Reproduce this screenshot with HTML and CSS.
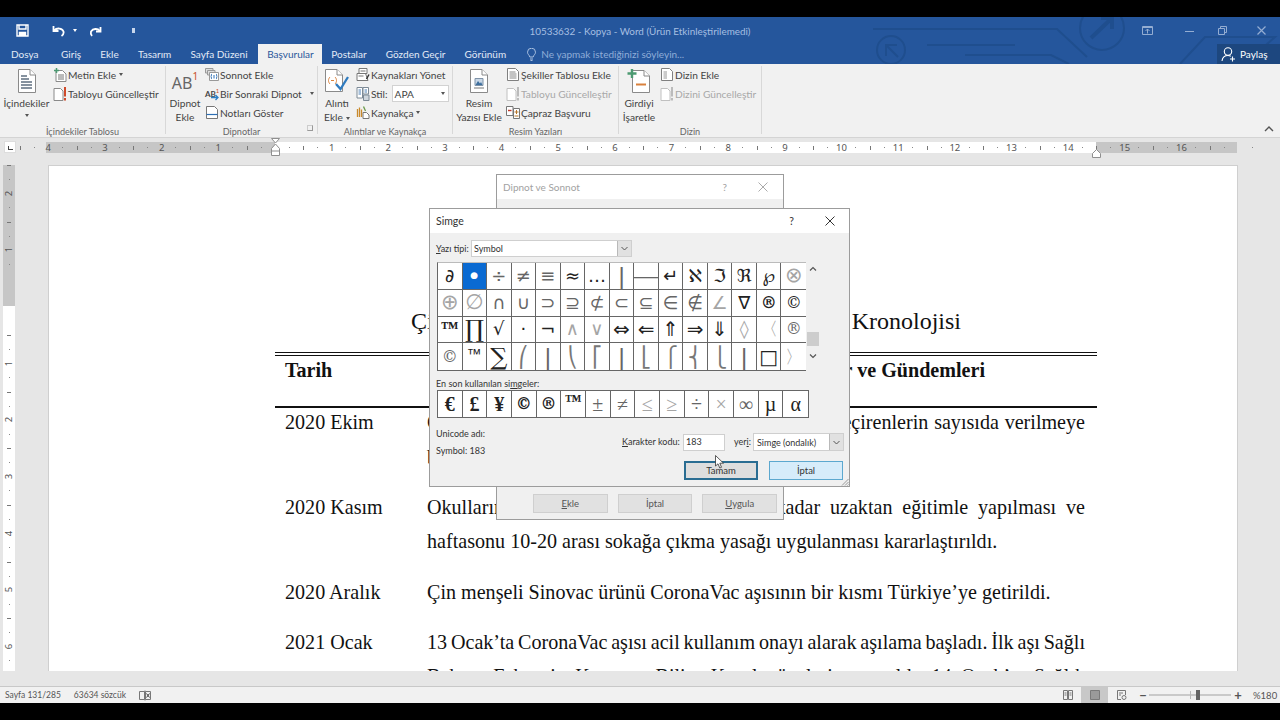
FILE: index.html
```html
<!DOCTYPE html>
<html lang="tr">
<head>
<meta charset="utf-8">
<title>10533632 - Kopya - Word</title>
<link rel="stylesheet" href="styles.css">
</head>
<body>
<div class="screen">
  <div class="letterbox"></div>
  <header class="chrome">
    <svg class="circuit" width="415" height="47" viewBox="0 0 415 47" fill="none" stroke="#1f4e8e" stroke-width="2">
      <path d="M8 12H160L172 12H192L222 40"/><circle cx="26" cy="33" r="14"/><path d="M21 39V28H32M21 28L33 40"/>
      <path d="M62 28H150"/><path d="M100 38H186L204 47"/><circle cx="237" cy="11" r="22"/><path d="M226 21L247 1M236 1H247V12" stroke-width="4"/>
      <path d="M315 47L340 20H410L380 47"/>
    </svg>
    <div class="titlebar">
      <div class="qat">
        <svg class="q-save" width="13" height="13" viewBox="0 0 13 13" fill="none" stroke="#fff" stroke-width="1.4"><path d="M1 1H12V12H1Z"/><path d="M3 1V5H10V1"/><path d="M3.5 12V8.5H9.5V12" fill="#fff"/></svg>
        <svg class="q-undo" width="13" height="12" viewBox="0 0 13 12" fill="none" stroke="#fff" stroke-width="1.8"><path d="M1.5 1V6H6.5"/><path d="M2 5.5C5 2.5 10 3 11.5 6.5C12 8.5 11 10 9.5 11"/></svg>
        <span class="caret q-c1"></span>
        <svg class="q-redo" width="13" height="12" viewBox="0 0 13 12" fill="none" stroke="#fff" stroke-width="1.8"><path d="M11.5 2V6.5H7"/><path d="M11 6C8.500 3 4 3.500 2 6.500C1.500 8 1.800 9.500 3 11"/></svg>
        <span class="q-more"></span>
      </div>
      <div class="doc-title">10533632 - Kopya - Word (Ürün Etkinleştirilemedi)</div>
      <div class="winbtns">
        <svg width="11" height="9" viewBox="0 0 11 9" fill="none" stroke="#94add2"><path d="M.5.5H10.500V8.500H.5Z"/><path d="M5.500 7.500V3M3.500 5L5.500 3L7.500 5" /><path d="M1 1.500H10" /></svg>
        <svg class="w-min" width="9" height="9" viewBox="0 0 9 9" stroke="#94add2"><path d="M0 5.500H9"/></svg>
        <svg class="w-res" width="9" height="9" viewBox="0 0 9 9" fill="none" stroke="#94add2"><path d="M.5 2.500H6.500V8.500H.5ZM2.500 2.500V.5H8.500V6.500H6.500"/></svg>
        <svg class="w-cls" width="9" height="9" viewBox="0 0 9 9" stroke="#94add2" stroke-width="1.200"><path d="M.5.5L8.500 8.500M8.500.5L.5 8.500"/></svg>
      </div>
    </div>
    <nav class="tabs">
      <a class="tab t-file">Dosya</a>
      <a class="tab">Giriş</a>
      <a class="tab">Ekle</a>
      <a class="tab">Tasarım</a>
      <a class="tab">Sayfa Düzeni</a>
      <a class="tab active">Başvurular</a>
      <a class="tab">Postalar</a>
      <a class="tab">Gözden Geçir</a>
      <a class="tab">Görünüm</a>
      <div class="tellme">
        <svg width="9" height="13" viewBox="0 0 9 13" fill="none" stroke="#a9c0e0"><path d="M2.800 9C2.500 7 .5 6.500.5 4.200A4 4 0 0 1 8.500 4.200C8.500 6.500 6.500 7 6.200 9ZM3 11H6M3.500 12.500H5.500"/></svg>
        <span>Ne yapmak istediğinizi söyleyin...</span>
      </div>
      <div class="share">
        <svg width="15" height="15" viewBox="0 0 15 15" fill="none" stroke="#fff" stroke-width="1.100"><circle cx="7" cy="4.500" r="3.700"/><path d="M1 14C1.500 10 4 8.500 7 8.500C8 8.500 9 8.800 9.800 9.300"/><path d="M11.500 9.500V14.500M9 12H14" /></svg>
        <span>Paylaş</span>
      </div>
    </nav>
  </header>

  <section class="ribbon">
    <div class="group g1">
      <div class="gbody">
        <div class="large w-toc">
          <div class="ic"><svg width="18" height="24" viewBox="0 0 18 24" fill="#fff" stroke="#8a8a8a"><path d="M.5.5H12L17.500 6V23.500H.5Z"/><path d="M12 .5V6H17.500" /><path d="M3 7H9M3 10H11M3 13H14M3 16H14M3 19H14" stroke="#5f6f80" stroke-width="1.300"/></svg></div>
          <span>İçindekiler</span>
          <span class="caret dark big-caret"></span>
        </div>
        <div class="stack">
          <div class="sm"><svg width="13" height="14" viewBox="0 0 13 14" fill="#fff" stroke="#8a8a8a"><path d="M2.500 2.500H9L12.500 6V13.500H2.500Z"/><path d="M4.500 7H10.500M4.500 9H10.500M4.500 11H10.500" stroke="#777"/><path d="M3 0V5M.5 2.500H5.500" stroke="#4d9a72" stroke-width="1.500"/></svg><span>Metin Ekle</span><span class="caret dark"></span></div>
          <div class="sm"><svg width="13" height="14" viewBox="0 0 13 14" fill="#fff" stroke="#8a8a8a"><path d="M.5 1.500H7L9.500 4V13.500H.5Z"/><path d="M11.500 0V9.500M11.500 11V13.500" stroke="#d04a2a" stroke-width="2"/></svg><span>Tabloyu Güncelleştir</span></div>
        </div>
      </div>
      <div class="glabel">İçindekiler Tablosu</div>
    </div>

    <div class="group g2">
      <div class="gbody">
        <div class="large w-fn">
          <div class="ic ab"><span class="abt">AB</span><span class="sup">1</span></div>
          <span>Dipnot</span><span>Ekle</span>
        </div>
        <div class="stack st2">
          <div class="sm"><svg width="14" height="13" viewBox="0 0 14 13" fill="#fff" stroke="#999"><path d="M.5.5H8V5H.5Z" fill="#ddd"/><path d="M2.500 2.500H10V7H2.500Z" fill="#ddd"/><path d="M4.500 4.500H13.500V12.500H4.500Z"/><path d="M7 6C5.800 6 7 8.500 5.800 8.500C7 8.500 5.800 11 7 11M11 6C12.200 6 11 8.500 12.200 8.500C11 8.500 12.200 11 11 11" fill="none" stroke="#2d6fb5"/><path d="M9 7V10.500" stroke="#2d6fb5"/></svg><span>Sonnot Ekle</span></div>
          <div class="sm"><span class="ab-mini"><span class="abm">AB</span><span class="abs">1</span><svg width="8" height="7" viewBox="0 0 8 7" fill="none" stroke="#2d7fc4" stroke-width="1.300"><path d="M0 3.500H7M4.500 1L7 3.500L4.500 6"/></svg></span><span>Bir Sonraki Dipnot</span><span class="caret dark push"></span></div>
          <div class="sm"><svg width="12" height="13" viewBox="0 0 12 13" fill="#fff" stroke="#777"><path d="M.5.5H8.500L11.500 3.500V12.500H.5Z"/><path d="M.5 8.500H11.500" stroke="#2d6fb5" stroke-width="1.200"/></svg><span>Notları Göster</span></div>
        </div>
      </div>
      <div class="glabel">Dipnotlar<span class="launch"></span></div>
    </div>

    <div class="group g3">
      <div class="gbody">
        <div class="large w-cit">
          <div class="ic"><svg width="24" height="24" viewBox="0 0 24 24" fill="#fff" stroke="#8a8a8a"><path d="M.5.5H12L17.500 6V22.500H.5Z"/><path d="M12 .5V6H17.500"/><path d="M5 8C3 10 3 13 5 15M10 8C12 10 12 13 10 15" fill="none" stroke="#d9813c"/><path d="M6 11.500H9" stroke="#d9813c"/><path d="M11 15L15.500 20L23 8" fill="none" stroke="#2f7bbf" stroke-width="2.300"/></svg></div>
          <span>Alıntı</span><span>Ekle<span class="caret dark inl"></span></span>
        </div>
        <div class="stack st3">
          <div class="sm"><svg width="13" height="13" viewBox="0 0 13 13" fill="#fff" stroke="#777"><path d="M2.500.5H10.500V5.500H2.500ZM.5 5.500H9L11.500 12.500H.5Z"/><path d="M4 3H9M2 8H7" stroke="#777"/><path d="M12.500 6.500L10 11" stroke="#333" stroke-width="1.500"/></svg><span>Kaynakları Yönet</span></div>
          <div class="sm stil"><svg width="13" height="14" viewBox="0 0 13 14" fill="#fff" stroke="#7d8a96"><path d="M.5.5H6V11H.5ZM6.500.5H12V7H6.500Z"/><path d="M2 3H4.500M2 5H4.500M2 7H4.500M8 3H10.500M8 5H10.500" stroke="#4b7fb4"/><path d="M7 8H12.500V13.500H7Z" fill="#cfd6dd"/></svg><span class="stil-l">Stil:</span><span class="stil-box"><span>APA</span><span class="caret dark push"></span></span></div>
          <div class="sm"><svg width="13" height="13" viewBox="0 0 13 13" fill="none" stroke="#c98a2c"><path d="M1 11V3M3 11V1.500M5 11V3.500" stroke-width="1.300"/><path d="M7 .5L9 5" stroke="#6a9a4a" stroke-width="1.300"/><path d="M6.500 6.500H10L12.500 9V12.500H6.500Z" fill="#fff" stroke="#777"/></svg><span>Kaynakça</span><span class="caret dark"></span></div>
        </div>
      </div>
      <div class="glabel">Alıntılar ve Kaynakça</div>
    </div>

    <div class="group g4">
      <div class="gbody">
        <div class="large w-cap">
          <div class="ic"><svg width="18" height="24" viewBox="0 0 18 24" fill="#fff" stroke="#8a8a8a"><path d="M.5.5H12L17.500 6V23.500H.5Z"/><path d="M12 .5V6H17.500"/><path d="M5 9.500H13V16.500H5Z" fill="#c9d7e6" stroke="#7f93a8"/><path d="M5.500 16L8 12L10 14.500L11 13L12.500 16Z" fill="#3e6f9e" stroke="none"/><path d="M4 19H14" stroke="#777"/></svg></div>
          <span>Resim</span><span>Yazısı Ekle</span>
        </div>
        <div class="stack st4">
          <div class="sm"><svg width="12" height="13" viewBox="0 0 12 13" fill="#fff" stroke="#808080"><path d="M.5.5H8.500L11.500 3.500V12.500H.5Z"/><path d="M2.500 4H8.500M2.500 6H9.500M2.500 8H9.500M2.500 10H9.500" stroke="#888"/></svg><span>Şekiller Tablosu Ekle</span></div>
          <div class="sm off"><svg width="13" height="14" viewBox="0 0 13 14" fill="#fff" stroke="#c0c0c0"><path d="M.5 1.500H7L9.500 4V13.500H.5Z"/><path d="M11.500 0V9.500M11.500 11V13.500" stroke="#b5b5b5" stroke-width="1.800"/></svg><span>Tabloyu Güncelleştir</span></div>
          <div class="sm"><svg width="14" height="13" viewBox="0 0 14 13" fill="#fff" stroke="#777"><path d="M.5.5H7V9.500H.5Z"/><path d="M2 4.500H5.500" stroke="#c23a2a" stroke-width="1.400"/><path d="M7.500 2.500H13.500V12.500H7.500Z"/><path d="M10.500 4V8M8.500 6H12.500M8.500 10H12.500" stroke="#b7762b"/></svg><span>Çapraz Başvuru</span></div>
        </div>
      </div>
      <div class="glabel">Resim Yazıları</div>
    </div>

    <div class="group g5">
      <div class="gbody">
        <div class="large w-idx">
          <div class="ic"><svg width="24" height="24" viewBox="0 0 24 24" fill="#fff" stroke="#8a8a8a"><path d="M5.500 1.500H17L22.500 7V23.500H5.500Z"/><path d="M17 1.500V7H22.500"/><path d="M9 15.500H19" stroke="#d9813c" stroke-width="2"/><path d="M5 0V9M.5 4.500H9.500" stroke="#4d9a72" stroke-width="2.400"/></svg></div>
          <span>Girdiyi</span><span>İşaretle</span>
        </div>
        <div class="stack st5">
          <div class="sm"><svg width="12" height="13" viewBox="0 0 12 13" fill="#fff" stroke="#808080"><path d="M.5.5H8.500L11.500 3.500V12.500H.5Z"/><path d="M2.500 4H6M2.500 6H6M2.500 8H6M2.500 10H6" stroke="#999"/></svg><span>Dizin Ekle</span></div>
          <div class="sm off"><svg width="13" height="14" viewBox="0 0 13 14" fill="#fff" stroke="#c0c0c0"><path d="M.5 1.500H7L9.500 4V13.500H.5Z"/><path d="M11.500 0V9.500M11.500 11V13.500" stroke="#b5b5b5" stroke-width="1.800"/></svg><span>Dizini Güncelleştir</span></div>
        </div>
      </div>
      <div class="glabel">Dizin</div>
    </div>
    <div class="collapse"><svg width="10" height="6" viewBox="0 0 10 6" fill="none" stroke="#555" stroke-width="1.400"><path d="M1 5L5 1L9 5"/></svg></div>
  </section>

  <div class="hruler-row">
    <div class="tabsel"><span class="tabsel-l"></span></div>
    <div class="hruler">
      <div class="hcells">
        <span>4</span><span>3</span><span>2</span><span>1</span><span></span><span>1</span><span>2</span><span>3</span><span>4</span><span>5</span><span>6</span><span>7</span><span>8</span><span>9</span><span>10</span><span>11</span><span>12</span><span>13</span><span>14</span><span>15</span><span>16</span><span></span>
      </div>
      <svg class="m-left" width="9" height="19" viewBox="0 0 9 19" fill="#fff" stroke="#8f8f8f"><path d="M.5.5H8.500L4.500 5ZM4.500 6L8.500 10.500V17.500H.5V10.500ZM.5 13H8.500"/></svg>
      <svg class="m-right" width="9" height="9" viewBox="0 0 9 9" fill="#fff" stroke="#8f8f8f"><path d="M4.500.5L8.500 4.500V8.500H.5V4.500Z"/></svg>
    </div>
  </div>

  <main class="workspace">
    <div class="vruler">
      <span class="g"><b>2</b></span><span class="g"><b>1</b></span><span class="hg"></span><span class="w"><b>1</b></span><span class="w"><b>2</b></span><span class="w"><b>3</b></span><span class="w"><b>4</b></span><span class="w"><b>5</b></span><span class="w"><b>6</b></span>
    </div>
    <article class="page">
      <h1 class="doc-h">Çizelge 3. Türkiye’de COVID-19 Aşı Süreci Kronolojisi</h1>
      <div class="thead">
        <span class="c1">Tarih</span>
        <span class="c2">Türkiye’de Pandeminin Önemli Olaylar ve Gündemleri</span>
      </div>
      <div class="rows">
        <div class="row"><span class="c1">2020 Ekim</span><p class="c2">Günlük vaka sayısı açıklaması yerine sadece ağır geçirenlerin sayısıda verilmeye başlandı.</p></div>
        <div class="row"><span class="c1">2020 Kasım</span><p class="c2">Okulların birinci yarıyıl dönemi sonuna kadar uzaktan eğitimle yapılması ve haftasonu 10-20 arası sokağa çıkma yasağı uygulanması kararlaştırıldı.</p></div>
        <div class="row"><span class="c1">2020 Aralık</span><p class="c2">Çin menşeli Sinovac ürünü CoronaVac aşısının bir kısmı Türkiye’ye getirildi.</p></div>
        <div class="row"><span class="c1">2021 Ocak</span><p class="c2 tight">13 Ocak’ta CoronaVac aşısı acil kullanım onayı alarak aşılama başladı. İlk aşı Sağlı<br>Bakanı Fahrettin Koca ve Bilim Kurulu üyelerine yapıldı. 14 Ocak’ta Sağlık</p></div>
      </div>
    </article>
  </main>
  <div class="hscroll"></div>

  <footer class="status">
    <span>Sayfa 131/285</span>
    <span class="words">63634 sözcük</span>
    <svg width="12" height="11" viewBox="0 0 12 11" fill="none" stroke="#777"><path d="M5.500 1.500H.5V9.500H5.500ZM6 .5V10.500"/><path d="M6.500 1.500H11.500V9.500H6.500Z"/><path d="M7.500 3.500L10.500 7.500M10.500 3.500L7.500 7.500" stroke="#444"/></svg>
    <div class="views">
      <span class="v"><svg width="10" height="10" viewBox="0 0 10 10" fill="none" stroke="#777"><path d="M.5.500H4.500V9.500H.5ZM5.500.500H9.500V9.500H5.500Z"/><path d="M1.500 3H3.500M1.500 5H3.500M6.500 3H8.500M6.500 5H8.500"/></svg></span>
      <span class="v on"><svg width="10" height="10" viewBox="0 0 10 10" fill="#9a9a9a" stroke="#7a7a7a"><path d="M.5.500H9.500V9.500H.5Z"/></svg></span>
      <span class="v"><svg width="10" height="10" viewBox="0 0 10 10" fill="none" stroke="#777"><path d="M.5.500H8.500V5M.5.500V9.500H4"/><path d="M2 3H6M2 5H4"/><circle cx="7" cy="7.500" r="2"/></svg></span>
    </div>
    <div class="zoom">
      <span class="z-btn">−</span>
      <div class="z-track"><i class="z-mid"></i><i class="z-thumb"></i></div>
      <span class="z-btn">+</span>
    </div>
    <span class="pct">%180</span>
  </footer>
  <div class="letterbox bottom"></div>

  <div class="dlg back">
    <div class="dlg-title"><span class="dt-name">Dipnot ve Sonnot</span><span class="dt-q">?</span><svg width="10" height="10" viewBox="0 0 10 10" stroke="#aaa"><path d="M.5.5L9.500 9.500M9.500.5L.5 9.500"/></svg></div>
    <div class="back-body"></div>
    <div class="back-foot">
      <button class="bbtn"><u>E</u>kle</button>
      <button class="bbtn">İptal</button>
      <button class="bbtn"><u>U</u>ygula</button>
    </div>
  </div>

  <div class="dlg simge">
    <div class="dlg-title front"><span class="dt-name">Simge</span><span class="dt-q">?</span><svg width="10" height="10" viewBox="0 0 10 10" stroke="#333"><path d="M.5.5L9.500 9.500M9.500.5L.5 9.500"/></svg></div>
    <div class="sbody">
      <div class="fontline">
        <label><u>Y</u>azı tipi:</label>
        <div class="combo wide"><span>Symbol</span><i class="cbtn"><svg width="7" height="5" viewBox="0 0 7 5" fill="none" stroke="#555"><path d="M.5 1L3.500 4L6.500 1"/></svg></i></div>
      </div>
      <div class="gridwrap">
        <div class="cgrid">
          <span class="s-it">∂</span><span class="sel">●</span><span class="m">÷</span><span class="m">≠</span><span class="m">≡</span><span>≈</span><span>…</span><span class="m bar">|</span><span class="m dash">—</span><span>↵</span><span>ℵ</span><span>ℑ</span><span>ℜ</span><span>℘</span><span class="l ci">⊗</span>
          <span class="l ci">⊕</span><span class="l ci">∅</span><span class="m">∩</span><span class="m">∪</span><span class="m">⊃</span><span class="m">⊇</span><span class="m">⊄</span><span class="m">⊂</span><span class="m">⊆</span><span class="m">∈</span><span class="m">∉</span><span class="l">∠</span><span>∇</span><span class="sm-g b">®</span><span class="sm-g">©</span>
          <span class="tm b">™</span><span class="big">∏</span><span>√</span><span>·</span><span>¬</span><span class="l">∧</span><span class="l">∨</span><span class="ar">⇔</span><span class="ar">⇐</span><span class="ar">⇑</span><span class="ar">⇒</span><span class="ar">⇓</span><span class="l">◊</span><span class="l">〈</span><span class="m sm-g">®</span>
          <span class="m sm-g">©</span><span class="tm tm-s">™</span><span class="big">∑</span><span class="m tall">⎛</span><span class="m bar">|</span><span class="m tall">⎝</span><span class="m tall">⎡</span><span class="m bar">|</span><span class="m tall">⎣</span><span class="m tall">⎧</span><span class="m tall">⎨</span><span class="m tall">⎩</span><span class="m bar">|</span><span class="rect">□</span><span class="l">〉</span>
        </div>
        <div class="vscroll">
          <svg width="8" height="5" viewBox="0 0 8 5" fill="none" stroke="#555" stroke-width="1.200"><path d="M1 4.500L4 1.500L7 4.500"/></svg>
          <i class="thumb"></i>
          <svg width="8" height="5" viewBox="0 0 8 5" fill="none" stroke="#555" stroke-width="1.200"><path d="M1 .5L4 3.500L7 .5"/></svg>
        </div>
      </div>
      <div class="recent-l">En son kullanılan si<u>m</u>geler:</div>
      <div class="recent">
        <span class="b">€</span><span class="b">£</span><span class="b">¥</span><span class="sm-g b">©</span><span class="sm-g b">®</span><span class="tm b">™</span><span class="m">±</span><span class="m">≠</span><span class="l">≤</span><span class="l">≥</span><span class="m">÷</span><span class="l">×</span><span class="m">∞</span><span>µ</span><span>α</span>
      </div>
      <div class="codeline">
        <div class="uni"><div>Unicode adı:</div><div>Symbol: 183</div></div>
        <label class="kk"><u>K</u>arakter kodu:</label>
        <div class="input">183</div>
        <label class="yeri">yer<u>i</u>:</label>
        <div class="combo small"><span>Simge (ondalık)</span><i class="cbtn"><svg width="7" height="5" viewBox="0 0 7 5" fill="none" stroke="#555"><path d="M.5 1L3.500 4L6.500 1"/></svg></i></div>
      </div>
      <div class="actions">
        <button class="dbtn primary">Tamam</button>
        <button class="dbtn hot">İptal</button>
      </div>
    </div>
    <svg class="grip" width="8" height="8" viewBox="0 0 8 8" stroke="#999"><path d="M7.500 1L1 7.500M7.500 4L4 7.500M7.500 6.500L6.500 7.500"/></svg>
    <svg class="cursor" width="10" height="14" viewBox="0 0 10 14" fill="#fff" stroke="#333" stroke-width=".8"><path d="M.5.5V11L3 8.800L4.800 13L6.500 12.300L4.800 8.200H8.500Z"/></svg>
  </div>
</div>
</body>
</html>
```

FILE: styles.css
```css
* { box-sizing: border-box; }
html, body { margin: 0; padding: 0; background: #000; }
.screen {
  width: 1280px; height: 720px; position: relative; overflow: hidden;
  display: flex; flex-direction: column;
  font-family: Lato, "Noto Sans", sans-serif; color: #444; background: #000;
}
.letterbox { height: 17px; flex: none; background: #000; }
.letterbox.bottom { height: 17px; }

/* header */
.chrome { position: relative; flex: none; height: 47px; background: #25569c; }
.circuit { position: absolute; left: 865px; top: 0; }
.titlebar { position: relative; height: 27px; display: flex; align-items: center; }
.qat { display: flex; align-items: center; padding-left: 16px; width: 400px; }
.q-undo { margin-left: 23px; }
.q-c1 { margin-left: 8px; border-top-color: #cfdcf0; }
.q-redo { margin-left: 12px; }
.q-more { width: 3px; height: 5px; margin-left: 30px; background: #c8d6ec; }
.doc-title { position: absolute; left: 0; right: 0; text-align: center; font-size: 9.9px; color: #a6bfe2; }
.winbtns { margin-left: auto; display: flex; align-items: center; padding-right: 14px; }
.w-min { margin-left: 32px; }
.w-res { margin-left: 24px; }
.w-cls { margin-left: 30px; }
.tabs { position: relative; height: 20px; display: flex; align-items: stretch; font-size: 10px; color: #e3ebf7; }
.tab { display: flex; align-items: center; padding: 0 9.6px; line-height: 1; }
.tab.t-file { padding: 0 13px 0 11px; }
.tab.active { background: #f1f1f1; color: #2b579a; padding: 0 8px 0 9px; margin-left: 1px; }
.tellme { display: flex; align-items: center; gap: 5px; margin-left: 11.6px; color: #8fadd8; }
.share { margin-left: auto; width: 63px; display: flex; align-items: center; gap: 4px; padding-left: 4px; background: #1d477f; color: #fff; }
.caret { display: inline-block; width: 0; height: 0; border: 2.5px solid transparent; border-top: 3px solid #fff; border-bottom: 0; }
.caret.dark { border-top-color: #555; }

/* ribbon */
.ribbon { flex: none; height: 74px; background: #f1f1f1; border-bottom: 1px solid #d4d4d4; display: flex; padding-top: 2px; position: relative; font-size: 10.2px; color: #444; }
.group { flex: none; display: flex; flex-direction: column; border-right: 1px solid #d8d8d8; margin-bottom: 3px; position: relative; }
.g1 { width: 166px; } .g2 { width: 152px; } .g3 { width: 135px; } .g4 { width: 166px; } .g5 { width: 143px; }
.gbody { height: 57px; display: flex; flex: none; }
.glabel { margin-top: 2px; text-align: center; font-size: 9.1px; line-height: 14px; color: #666; }
.large { display: flex; flex-direction: column; align-items: center; flex: none; line-height: 14px; white-space: nowrap; height: 58px; }
.ic { height: 30px; padding-top: 3px; flex: none; display: flex; justify-content: center; }
.w-toc { width: 53px; } .w-fn { width: 38px; } .w-cit { width: 38px; } .w-cap { width: 52px; } .w-idx { width: 40px; }
.big-caret { margin-top: 4px; }
.inl { margin-left: 3px; vertical-align: middle; }
.ab { align-items: flex-start; padding-top: 8px; color: #666; font-family: "Noto Sans", sans-serif; }
.abt { font-size: 16px; line-height: 18px; }
.sup { font-size: 10px; line-height: 10px; color: #c8502a; margin-top: -3px; }
.stack { display: flex; flex-direction: column; flex: none; margin-top: -1px; }
.sm { height: 19px; display: flex; align-items: center; gap: 1px; white-space: nowrap; }
.sm > svg, .ab-mini { width: 14px; flex: none; }
.sm .caret { margin-left: 2px; }
.sm .push { margin-left: auto; }
.off { color: #a8a8a8; }
.st2 { width: 110px; padding-left: 1px; }
.st3 { width: 93px; }
.st4 { padding-left: 1px; }
.st5 { padding-left: 1px; }
.ab-mini { position: relative; height: 14px; display: block; }
.abm { font-size: 8px; line-height: 10px; color: #444; font-weight: 700; }
.abs { font-size: 6px; color: #c8502a; vertical-align: top; line-height: 7px; }
.ab-mini svg { position: absolute; left: 6px; bottom: 0; }
.stil-l { flex: none; }
.stil-box { margin-left: 3px; width: 58px; height: 17px; background: #fff; border: 1px solid #d2d2d2; display: flex; align-items: center; padding: 0 3px 0 2px; }
.launch { position: absolute; right: 4px; bottom: 3px; width: 6px; height: 6px; border: 1px solid #999; border-top-color: #ccc; border-left-color: #ccc; }
.collapse { position: absolute; right: 6px; bottom: 5px; line-height: 0; }

/* rulers */
.hruler-row { flex: none; height: 27px; background: #e6e6e6; display: flex; padding-top: 4px; position: relative; }
.tabsel { width: 12px; height: 12px; margin: -1px 0 0 4px; background: #fff; border: 1px solid #ddd; position: relative; flex: none; display: flex; align-items: center; justify-content: center; }
.tabsel-l { width: 5px; height: 4px; margin-top: 2px; border-left: 1px solid #444; border-bottom: 1px solid #444; }
.hruler {
  margin-left: 30px; width: 1191px; height: 11px; position: relative;
  background: linear-gradient(90deg, #c6c6c6 229px, #fff 229px, #fff 1050px, #c6c6c6 1050px);
}
.hcells { display: flex; margin-left: -26px; width: 1300px; height: 11px; overflow: visible; }
.hcells span, .vruler span {
  flex: none; display: flex; align-items: center; justify-content: center;
  color: #555; font-size: 9.5px; font-family: "Noto Sans", sans-serif; background-repeat: no-repeat;
}
.hcells span {
  width: 56.67px; height: 11px;
  background-image: linear-gradient(#777,#777), linear-gradient(#888,#888), linear-gradient(#888,#888);
  background-size: 1px 4px, 1px 1px, 1px 1px;
  background-position: 0 center, 14px center, 42px center;
}
.m-left { position: absolute; left: 225px; top: -4px; }
.m-right { position: absolute; left: 1046px; top: 7px; }
.workspace { flex: none; height: 506px; background: #e6e6e6; display: flex; overflow: hidden; }
.vruler { flex: none; width: 12px; margin-left: 3px; display: flex; flex-direction: column; }
.vruler span {
  height: 56.67px; width: 12px;
  background-image: linear-gradient(#777,#777), linear-gradient(#888,#888), linear-gradient(#888,#888);
  background-size: 4px 1px, 1px 1px, 1px 1px;
  background-position: center 0, center 14px, center 42px;
}
.vruler .g { background-color: #c6c6c6; }
.vruler .hg { background: linear-gradient(#c6c6c6 50%, #fff 50%); }
.vruler .w { background-color: #fff; }
.vruler b { font-weight: 400; transform: rotate(-90deg); }

/* page */
.page {
  flex: none; width: 1188px; margin: 1px 0 0 34px; height: 600px; background: #fff;
  box-shadow: 0 0 0 1px #cfcfcf;
  padding: 137px 140px 0 226px;
  font-family: "Liberation Serif", "Times New Roman", serif; color: #111; font-size: 20.1px;
}
.doc-h {
  margin: 0 0 0 136px; width: 550px; font-weight: 400; font-size: 24px; line-height: 36px;
  text-align: justify; text-align-last: justify; white-space: nowrap;
}
.thead {
  margin-top: 13px; height: 56px; border-top: 4px double #111; border-bottom: 2px solid #111;
  display: flex; justify-content: space-between; padding: 0 112px 0 10px; font-weight: 700; line-height: 28px; white-space: nowrap;
}
.rows { padding: 0 12px 0 10px; margin-top: -3px; line-height: 34.5px; }
.row { display: flex; margin-bottom: 15.8px; }
.row .c1 { flex: none; width: 142px; }
.row .c2 { margin: 0; flex: 1; text-align: justify; }
.row .tight { text-align-last: justify; word-spacing: -1.2px; }
.hscroll { flex: none; height: 15px; background: #e6e6e6; }

/* status */
.status {
  flex: none; height: 17px; background: #f1f1f1; border-top: 1px solid #c8c8c8; display: flex; align-items: center;
  padding-left: 5px; font-size: 8.5px; color: #555; white-space: nowrap;
}
.words { margin-left: 13px; margin-right: 13px; }
.views { margin-left: auto; display: flex; height: 100%; }
.v { width: 27px; display: flex; align-items: center; justify-content: center; }
.v.on { background: #c8c8c8; }
.zoom { display: flex; align-items: center; margin-left: 4px; }
.z-btn { font-size: 13px; font-weight: 700; line-height: 1; width: 8px; text-align: center; color: #555; }
.z-track { width: 82px; height: 2px; margin: 0 3px 0 2px; background: #c9c9c9; position: relative; }
.z-mid { position: absolute; left: 41px; top: -3px; width: 1px; height: 8px; background: #bbb; }
.z-thumb { position: absolute; left: 47px; top: -4px; width: 4px; height: 10px; background: #666; }
.pct { width: 21px; margin-left: 11px; margin-right: 6px; font-size: 9.5px; }

/* dialogs */
.dlg { position: absolute; border: 1px solid #9c9c9c; display: flex; flex-direction: column; }
.back { left: 496px; top: 174px; width: 288px; height: 346px; background: #f0f0f0; color: #777; }
.simge { left: 429px; top: 208px; width: 421px; height: 279px; background: #f0f0f0; color: #333; font-size: 9px; }
.dlg-title { height: 24px; flex: none; background: #fff; display: flex; align-items: center; padding: 0 15px 0 6px; font-size: 10px; color: #a2a2a2; }
.dlg-title.front { height: 24px; color: #333; padding: 0 14px 0 6px; font-size: 10.5px; }
.dt-q { margin-left: auto; margin-right: 31px; }
.back-body { flex: 1; }
.back-foot { display: flex; gap: 10px; padding: 0 6px 6px 36px; }
.bbtn { width: 75px; height: 19px; padding: 0; background: #e1e1e1; border: 1px solid #cfcfcf; font: 9.5px Lato, sans-serif; color: #555; }
.sbody { padding: 7px 5px 0 6px; display: flex; flex-direction: column; flex: 1; }
.fontline { display: flex; align-items: center; height: 17px; }
.fontline label { width: 35px; flex: none; white-space: nowrap; }
.combo { height: 17px; background: #fff; border: 1px solid #cfcfcf; display: flex; align-items: center; padding-left: 2px; flex: none; }
.combo.wide { width: 161px; }
.cbtn { margin-left: auto; width: 14px; height: 100%; background: #e1e1e1; border-left: 1px solid #b9b9b9; display: flex; align-items: center; justify-content: center; }
.gridwrap { display: flex; margin-top: 5px; margin-left: 1px; }
.cgrid {
  width: 369px; display: grid; grid-template-columns: repeat(15, 1fr); grid-auto-rows: 26.75px;
  background: #fff; border-bottom: 1px solid #666; border-left: 1px solid #666; border-top: 1px solid #bbb;
  font-family: "DejaVu Sans", "DejaVu Serif", serif; font-size: 18px; color: #222;
}
.cgrid span, .recent span {
  display: flex; align-items: center; justify-content: center; overflow: hidden; line-height: 1;
  border-right: 1px solid #666; border-bottom: 1px solid #666;
}
.cgrid span:nth-child(15n) { border-right: 0; }
.cgrid span:nth-last-child(-n+15) { border-bottom: 0; }
.cgrid .m { color: #666; }
.cgrid .l, .recent .l { color: #a5a5a5; }
.recent .m { color: #666; }
.cgrid .sel { background: #0a6ad2; color: #fff; font-size: 9px; }
.s-it { font-style: italic; }
.cgrid .ci { font-size: 21px; }
.cgrid .tall { font-size: 20px; color: #777; }
.cgrid .bar { font-size: 24px; font-family: "Liberation Sans", sans-serif; font-weight: 400; }
.cgrid .dash { font-size: 25px; font-family: "Liberation Serif", serif; }
.cgrid .ar { font-size: 20px; font-weight: 400; }
.cgrid .rect { font-size: 20px; }
.cgrid .big { font-size: 24px; font-family: "DejaVu Serif", serif; }
.tm { font-size: 18px !important; font-family: "Liberation Serif", serif; align-items: flex-start !important; padding-top: 2px; }
.tm.tm-s { font-size: 15px !important; font-family: "Liberation Sans", sans-serif; padding-top: 3px; }
.b { font-weight: 700; }
.sm-g { font-size: 16px; font-family: "DejaVu Serif", serif; }
.vscroll { width: 14px; display: flex; flex-direction: column; align-items: center; padding-top: 4px; }
.thumb { width: 12px; height: 14px; margin-top: 61px; background: #cdcdcd; }
.vscroll svg:last-child { margin-top: 8px; }
.recent-l { margin-top: 7px; line-height: 12px; }
.recent {
  margin: 0 0 0 1px; width: 372px; height: 28px; display: grid; grid-template-columns: repeat(15, 1fr);
  background: #fff; border: 1px solid #666;
  font-family: "Liberation Serif", serif; font-size: 20px; color: #222;
}
.recent span { border-bottom: 0; }
.recent span:last-child { border-right: 0; }
.recent .sm-g { font-size: 16px; }
.recent .tm { font-size: 17px !important; padding-top: 1px; }
.codeline { display: flex; margin-top: 6px; height: 32px; align-items: flex-start; white-space: nowrap; }
.uni { width: 186px; flex: none; line-height: 17px; padding-top: 1px; }
.codeline label { padding-top: 12px; flex: none; }
.kk { width: 61px; }
.input { width: 42px; height: 17px; margin-top: 10px; background: #fff; border: 1px solid #cfcfcf; padding-left: 2px; line-height: 14px; flex: none; }
.yeri { margin-left: 9px; width: 19px; }
.combo.small { width: 91px; height: 18px; margin-top: 9px; padding-left: 3px; }
.actions { display: flex; gap: 11px; justify-content: flex-end; padding-right: 1px; margin-top: 5px; }
.dbtn { width: 74px; height: 19px; padding: 0; font: 9.5px Lato, sans-serif; color: #333; }
.primary { background: #dedede; border: 2px solid #2a6d92; }
.hot { background: #d6ecfa; border: 1px solid #5ca8cf; }
.grip { position: absolute; right: 0; bottom: 0; }
.cursor { position: absolute; left: 285px; top: 246px; }
```
